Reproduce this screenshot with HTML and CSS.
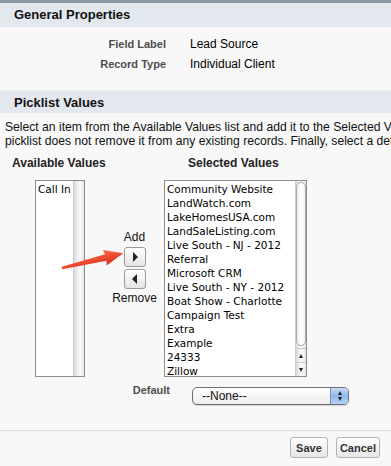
FILE: index.html
```html
<!DOCTYPE html>
<html lang="en">
<head>
  <meta charset="UTF-8">
  <title>Edit Picklist Values</title>
  <link rel="stylesheet" href="styles.css">
</head>
<body>
  <div class="page">
    <div class="topbar"></div>
    <div class="section-head">General Properties</div>
    <div class="props">
      <div class="prop-row">
        <div class="prop-label">Field Label</div>
        <div class="prop-value">Lead Source</div>
      </div>
      <div class="prop-row">
        <div class="prop-label">Record Type</div>
        <div class="prop-value">Individual Client</div>
      </div>
    </div>

    <div class="section-head picklist-head">Picklist Values</div>
    <p class="intro">Select an item from the Available Values list and add it to the Selected Values list. Removing a value from the<br>picklist does not remove it from any existing records. Finally, select a default value for the picklist.</p>

    <div class="list-heads">
      <div class="list-head first">Available Values</div>
      <div class="list-head">Selected Values</div>
    </div>

    <div class="lists">
      <div class="listbox available">
        <div class="items">
          <div>Call In</div>
        </div>
        <div class="track"></div>
      </div>

      <div class="movers">
        <div class="mover-label">Add</div>
        <button class="mover"><span class="tri right"></span></button>
        <button class="mover"><span class="tri left"></span></button>
        <div class="mover-label">Remove</div>
      </div>

      <div class="listbox selected">
        <div class="items">
          <div>Community Website</div>
          <div>LandWatch.com</div>
          <div>LakeHomesUSA.com</div>
          <div>LandSaleListing.com</div>
          <div>Live South - NJ - 2012</div>
          <div>Referral</div>
          <div>Microsoft CRM</div>
          <div>Live South - NY - 2012</div>
          <div>Boat Show - Charlotte</div>
          <div>Campaign Test</div>
          <div>Extra</div>
          <div>Example</div>
          <div>24333</div>
          <div>Zillow</div>
        </div>
        <div class="track">
          <div class="thumb"></div>
          <div class="step"><span class="mini up"></span></div>
          <div class="step"><span class="mini down"></span></div>
        </div>
      </div>
    </div>

    <div class="default-row">
      <div class="prop-label">Default</div>
      <div class="select">
        <span class="select-text">--None--</span>
        <span class="select-arrows"><span class="mini up"></span><span class="mini down"></span></span>
      </div>
    </div>

    <div class="footer">
      <button class="btn">Save</button>
      <button class="btn">Cancel</button>
    </div>

    <svg class="callout" width="391" height="466" viewBox="0 0 391 466">
      <defs>
        <linearGradient id="red" x1="0" y1="0" x2="0" y2="1">
          <stop offset="0" stop-color="#ff6a50"/>
          <stop offset="1" stop-color="#d92a14"/>
        </linearGradient>
      </defs>
      <g transform="translate(62 268) rotate(-13.5)">
        <polygon points="0,-1.2 45,-3.3 44,-8 63,0 44,8 45,3.3 0,1.2" fill="url(#red)"/>
      </g>
    </svg>
  </div>
</body>
</html>
```

FILE: styles.css
```css
* {
  margin: 0;
  padding: 0;
  box-sizing: border-box;
}

body {
  background: #f8f8f8;
  font-family: 'Liberation Sans', Arial, sans-serif;
  color: #000;
  overflow: hidden;
}

.page {
  position: relative;
  width: 391px;
  height: 466px;
  overflow: hidden;
}

.topbar {
  height: 3px;
  background: #8c95a3;
}

.section-head {
  height: 24px;
  line-height: 24px;
  padding-left: 14px;
  background: #e3e8ef;
  font-size: 13px;
  font-weight: bold;
  color: #111;
}

.picklist-head {
  height: 23px;
  line-height: 23px;
  border-top: 1px solid #eef0f3;
}

.props {
  height: 63px;
  padding-top: 7px;
}

.prop-row {
  display: flex;
  align-items: center;
  height: 20px;
}

.prop-label {
  width: 166px;
  text-align: right;
  font-size: 11px;
  font-weight: bold;
  color: #4d4d4d;
}

.prop-value {
  margin-left: 24px;
  font-size: 12px;
}

/* the sentence runs past the right edge, as in the dialog */
.intro {
  padding: 7px 0 0 5px;
  font-size: 12.15px;
  line-height: 14px;
  white-space: nowrap;
  color: #111;
}

.list-heads {
  display: flex;
  margin-top: 8px;
  height: 14px;
  line-height: 14px;
  font-size: 12px;
  font-weight: bold;
  color: #222;
}

.list-head.first {
  width: 188px;
  padding-left: 12px;
}

.lists {
  display: flex;
  align-items: flex-start;
  margin-top: 10px;
  padding-left: 35px;
}

.listbox {
  display: flex;
  height: 197px;
  background: #fff;
  border: 1px solid #8d8d8d;
  font-family: 'DejaVu Sans', 'Lucida Grande', sans-serif;
  font-size: 10.5px;
  line-height: 14px;
  color: #000;
}

.listbox .items {
  flex: 1;
  padding: 1px 0 0 2px;
  white-space: nowrap;
  overflow: hidden;
}

.available {
  width: 50px;
}

.selected {
  width: 143px;
}

.track {
  display: flex;
  flex-direction: column;
  width: 11px;
  background: linear-gradient(to right, #d8d8d8, #f3f3f3 40%, #fafafa 60%, #e6e6e6);
  border-left: 1px solid #cfcfcf;
}

.thumb {
  height: 165px;
  margin: 1px 0 2px;
  border: 1px solid #a9a9a9;
  border-radius: 6px;
  background: linear-gradient(to right, #e9e9e9, #ffffff 45%, #f2f2f2);
}

.step {
  display: flex;
  align-items: center;
  justify-content: center;
  height: 14px;
  border-top: 1px solid #c8c8c8;
}

.mini {
  width: 0;
  height: 0;
  border-left: 2.5px solid transparent;
  border-right: 2.5px solid transparent;
}

.mini.up {
  border-bottom: 4px solid #222;
}

.mini.down {
  border-top: 4px solid #222;
}

.movers {
  display: flex;
  flex-direction: column;
  align-items: center;
  gap: 2px;
  width: 79px;
  padding-left: 20px;
  margin-top: 50px;
}

.mover-label {
  font-size: 12px;
  line-height: 14px;
  color: #111;
}

.mover-label:first-child {
  margin-bottom: 1px;
}

.mover {
  display: flex;
  align-items: center;
  justify-content: center;
  width: 22px;
  height: 20px;
  border: 1px solid #9a9a9a;
  border-radius: 3px;
  background: linear-gradient(#ffffff, #e4e4e4);
}

.tri {
  width: 0;
  height: 0;
  border-top: 5px solid transparent;
  border-bottom: 5px solid transparent;
}

.tri.right {
  border-left: 5px solid #222;
  margin-left: 2px;
}

.tri.left {
  border-right: 5px solid #222;
  margin-right: 1px;
}

.default-row {
  display: flex;
  align-items: flex-start;
  margin-top: 6px;
}

.default-row .prop-label {
  width: 170px;
  line-height: 14px;
}

.select {
  display: flex;
  align-items: center;
  width: 157px;
  height: 18px;
  margin: 4px 0 0 22px;
  border: 1px solid #6f6f6f;
  border-radius: 5px;
  background: linear-gradient(#ffffff, #ececec);
  overflow: hidden;
  box-shadow: 0 1px 1px rgba(0, 0, 0, 0.15);
}

.select-text {
  flex: 1;
  padding-left: 9px;
  font-size: 12px;
  color: #111;
}

.select-arrows {
  display: flex;
  flex-direction: column;
  align-items: center;
  justify-content: center;
  gap: 2px;
  width: 18px;
  height: 100%;
  border-left: 1px solid #7a8fae;
  background: linear-gradient(#c9ddf6, #8fb8ea 50%, #b6d3f5);
}

.footer {
  display: flex;
  justify-content: flex-end;
  gap: 8px;
  margin-top: 25px;
  padding: 6px 11px 0 0;
  border-top: 1px solid #dcdcdc;
}

.btn {
  min-width: 38px;
  height: 21px;
  padding: 0 3px;
  border: 1px solid #b3b3b3;
  border-radius: 3px;
  background: linear-gradient(#ffffff, #e6e6e6);
  font-family: 'Liberation Sans', Arial, sans-serif;
  font-size: 11px;
  font-weight: bold;
  color: #333;
}

.callout {
  position: absolute;
  top: 0;
  left: 0;
  pointer-events: none;
}
```
